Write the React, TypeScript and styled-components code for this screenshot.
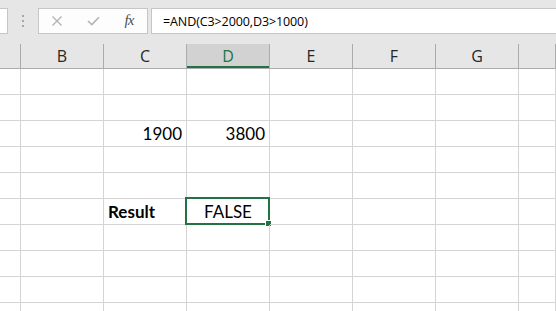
import React from "react";
import styled, { createGlobalStyle, css } from "styled-components";

const GlobalStyle = createGlobalStyle`
	body {
		margin: 0;
		background: #ffffff;
		font-family: "Open Sans", "Liberation Sans", sans-serif;
		overflow: hidden;
	}
`;

const COLUMNS = ["A", "B", "C", "D", "E", "F", "G", "H"];
const ACTIVE_COL = "D";
const ROW_COUNT = 10;

type CellData = { text: string; align?: "left" | "right" | "center"; bold?: boolean; selected?: boolean };

// keyed by "row:col", rows are zero based
const cells: Record<string, CellData> = {
	"2:C": { text: "1900", align: "right" },
	"2:D": { text: "3800", align: "right" },
	"5:C": { text: "Result", align: "left", bold: true },
	"5:D": { text: "FALSE", align: "center", selected: true },
};

const Window = styled.div`
	width: 556px;
	height: 311px;
	overflow: hidden;
`;

const FormulaBar = styled.div`
	display: flex;
	align-items: flex-start;
	height: 44px;
	padding-top: 8px;
	box-sizing: border-box;
	background: #e6e6e6;
`;

const NameBox = styled.div`
	width: 8px;
	height: 26px;
	box-sizing: border-box;
	background: #ffffff;
	border: 1px solid #c6c6c6;
	border-left: none;
`;

const Grip = styled.div`
	width: 30px;
	height: 26px;
	display: flex;
	flex-direction: column;
	align-items: center;
	justify-content: center;
	gap: 3px;
`;

const GripDot = styled.span`
	width: 2px;
	height: 2px;
	background: #a6a6a6;
`;

const ToolBox = styled.div`
	display: flex;
	width: 110px;
	height: 26px;
	box-sizing: border-box;
	background: #fdfdfd;
	border: 1px solid #c6c6c6;
	margin-right: 3px;
`;

const ToolSlot = styled.div`
	width: 36px;
	display: flex;
	align-items: center;
	justify-content: center;
`;

const FxLabel = styled.span`
	font-family: "Liberation Serif", "DejaVu Serif", serif;
	font-style: italic;
	font-size: 15px;
	color: #4f4f4f;
	letter-spacing: -1px;
	margin-top: -2px;
`;

const FormulaInput = styled.div`
	flex: 1;
	height: 26px;
	box-sizing: border-box;
	background: #ffffff;
	border: 1px solid #c6c6c6;
	border-right: none;
	padding-left: 11px;
	display: flex;
	align-items: center;
	font-size: 12.5px;
	letter-spacing: -0.1px;
	color: #000000;
`;

const Sheet = styled.div`
	display: grid;
	grid-template-columns: 21px repeat(6, 83px) 1fr;
`;

const HeaderCell = styled.div<{ $active?: boolean }>`
	height: 25px;
	box-sizing: border-box;
	background: #e6e6e6;
	border-right: 1px solid #ababab;
	border-bottom: 1px solid #ababab;
	display: flex;
	align-items: center;
	justify-content: center;
	font-size: 16px;
	color: #262626;
	${({ $active }) =>
		$active &&
		css`
			background: #d2d2d2;
			color: #217346;
			box-shadow: inset 0 -2px 0 #217346;
		`}
`;

const Cell = styled.div<{ $align: string; $bold?: boolean }>`
	position: relative;
	height: 26px;
	box-sizing: border-box;
	border-right: 1px solid #d4d4d4;
	border-bottom: 1px solid #d4d4d4;
	display: flex;
	align-items: center;
	justify-content: ${({ $align }) =>
		$align === "right" ? "flex-end" : $align === "center" ? "center" : "flex-start"};
	padding: 0 4px 0 4px;
	font-family: "Lato", "Open Sans", sans-serif;
	font-size: 17px;
	font-weight: ${({ $bold }) => ($bold ? 700 : 400)};
	color: #000000;
`;

const Selection = styled.div`
	position: absolute;
	top: -2px;
	left: -2px;
	right: -1px;
	bottom: -1px;
	border: 2px solid #217346;
	pointer-events: none;
`;

const FillHandle = styled.div`
	position: absolute;
	right: -4px;
	bottom: -4px;
	width: 5px;
	height: 5px;
	background: #217346;
	border: 1px solid #ffffff;
`;

const CrossIcon = () => (
	<svg width="12" height="12" viewBox="0 0 12 12">
		<path d="M1.5 1.5 L10.5 10.5 M10.5 1.5 L1.5 10.5" stroke="#b4b4b4" strokeWidth="1.4" fill="none" />
	</svg>
);

const CheckIcon = () => (
	<svg width="13" height="10" viewBox="0 0 13 10">
		<path d="M1 5 L4.8 8.6 L12 1.2" stroke="#b4b4b4" strokeWidth="1.6" fill="none" />
	</svg>
);

export default function App() {
	const rows = Array.from({ length: ROW_COUNT }, (_, i) => i);

	return (
		<Window>
			<GlobalStyle />
			<FormulaBar>
				<NameBox />
				<Grip>
					<GripDot />
					<GripDot />
					<GripDot />
				</Grip>
				<ToolBox>
					<ToolSlot>
						<CrossIcon />
					</ToolSlot>
					<ToolSlot>
						<CheckIcon />
					</ToolSlot>
					<ToolSlot>
						<FxLabel>fx</FxLabel>
					</ToolSlot>
				</ToolBox>
				<FormulaInput>=AND(C3&gt;2000,D3&gt;1000)</FormulaInput>
			</FormulaBar>
			<Sheet>
				{COLUMNS.map((col) => (
					<HeaderCell key={col} $active={col === ACTIVE_COL}>
						{col === "A" || col === "H" ? "" : col}
					</HeaderCell>
				))}
				{rows.map((r) =>
					COLUMNS.map((col) => {
						const data = cells[`${r}:${col}`];
						return (
							<Cell key={`${r}:${col}`} $align={data?.align ?? "left"} $bold={data?.bold}>
								{data?.text}
								{data?.selected && (
									<Selection>
										<FillHandle />
									</Selection>
								)}
							</Cell>
						);
					})
				)}
			</Sheet>
		</Window>
	);
}
